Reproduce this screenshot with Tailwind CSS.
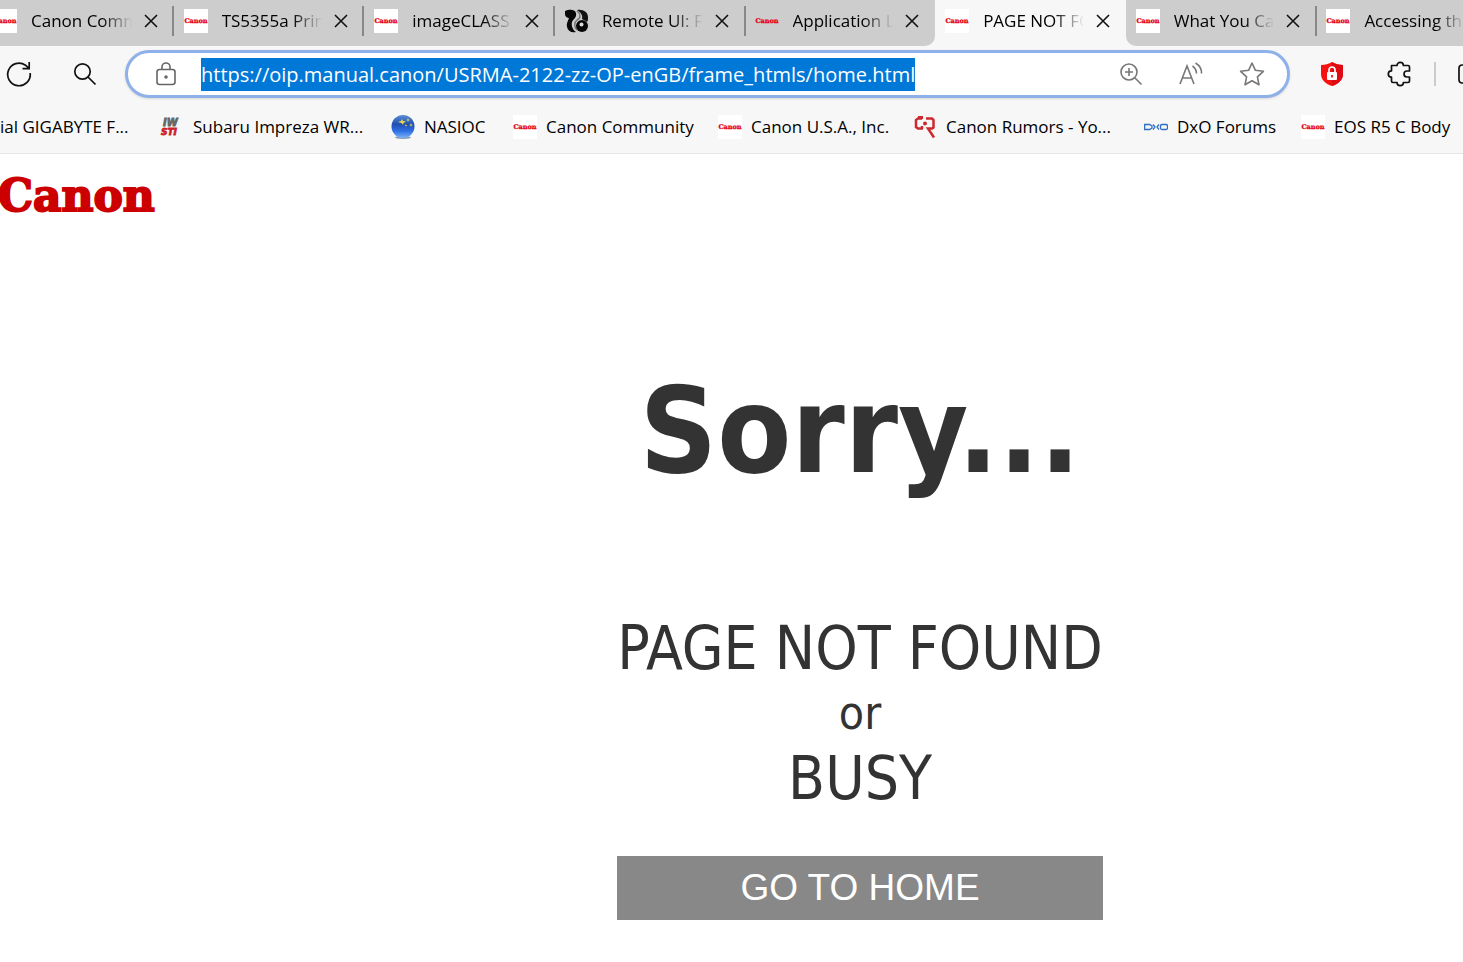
<!DOCTYPE html>
<html lang="en">
<head>
  <meta charset="UTF-8" />
  <meta name="viewport" content="width=device-width, initial-scale=1.0"/>
  <title>PAGE NOT FOUND</title>
  <script src="https://cdn.jsdelivr.net/npm/@tailwindcss/browser@4"></script>
</head>
<body class="bg-white min-h-screen overflow-hidden text-black font-['Open_Sans',sans-serif]">

  <!-- Shared icons -->
  <svg class="hidden">
    <symbol id="canon" viewBox="0 0 24 24">
      <text x="12" y="14" text-anchor="middle" font-family="DejaVu Serif" font-weight="bold" font-size="6.500" fill="#e60012" stroke="#e60012" stroke-width=".3">Canon</text>
    </symbol>
    <symbol id="close" viewBox="0 0 14 14">
      <path d="M1 1l12 12M13 1L1 13" fill="none" stroke="#111" stroke-width="1.6"/>
    </symbol>
  </svg>

  <!-- Tabs -->
  <nav class="flex h-[46px] -ml-[18px] -mr-[44px] bg-[#f7f7f7] text-[17px]" aria-label="Tabs">
    <div class="flex-1 min-w-0 flex items-center pb-1 pl-[11px] pr-[15px] bg-[#cdcdcd] relative">
      <svg class="size-6 shrink-0 bg-white"><use href="#canon"/></svg>
      <a href="#" class="ml-[14px] flex-1 overflow-hidden whitespace-nowrap mask-r-from-70%">Canon Comm</a>
      <button class="ml-3 p-0" aria-label="Close tab"><svg class="size-[14px]"><use href="#close"/></svg></button>
      <span class="absolute z-10 -right-px top-[6px] h-[30px] w-[2px] bg-[#888]"></span>
    </div>
    <div class="flex-1 min-w-0 flex items-center pb-1 pl-[11px] pr-[15px] bg-[#cdcdcd] relative">
      <svg class="size-6 shrink-0 bg-white"><use href="#canon"/></svg>
      <a href="#" class="ml-[14px] flex-1 overflow-hidden whitespace-nowrap mask-r-from-70%">TS5355a Prin</a>
      <button class="ml-3 p-0" aria-label="Close tab"><svg class="size-[14px]"><use href="#close"/></svg></button>
      <span class="absolute z-10 -right-px top-[6px] h-[30px] w-[2px] bg-[#888]"></span>
    </div>
    <div class="flex-1 min-w-0 flex items-center pb-1 pl-[11px] pr-[15px] bg-[#cdcdcd] relative">
      <svg class="size-6 shrink-0 bg-white"><use href="#canon"/></svg>
      <a href="#" class="ml-[14px] flex-1 overflow-hidden whitespace-nowrap mask-r-from-70%">imageCLASS</a>
      <button class="ml-3 p-0" aria-label="Close tab"><svg class="size-[14px]"><use href="#close"/></svg></button>
      <span class="absolute z-10 -right-px top-[6px] h-[30px] w-[2px] bg-[#888]"></span>
    </div>
    <div class="flex-1 min-w-0 flex items-center pb-1 pl-[10px] pr-4 bg-[#cdcdcd] relative">
      <svg class="size-6 shrink-0" viewBox="0 0 24 24">
        <path d="M1 2C5 0 11 0 12 4c1 5-3 6-4 9-1 4 1 8 4 10-5 1-8-1-9-5-1-3 1-6 2-9C4 9 1 8 1 5z" fill="#080808"/>
        <path d="M13 1c6-1 11 2 11 7 0 2 0 4-1 5-2-2-4-2-5-3 1-4-1-6-5-9z" fill="#111"/>
        <path d="M13 2c4 3 4 7 0 9-3 2-3 7 0 10" fill="none" stroke="#777" stroke-width="1.5"/>
        <circle cx="18" cy="17" r="6" fill="#080808"/>
        <circle cx="17.500" cy="15.500" r="2" fill="#ddd"/>
      </svg>
      <a href="#" class="ml-[14px] flex-1 overflow-hidden whitespace-nowrap mask-r-from-70%">Remote UI: F</a>
      <button class="ml-3 p-0" aria-label="Close tab"><svg class="size-[14px]"><use href="#close"/></svg></button>
      <span class="absolute z-10 -right-px top-[6px] h-[30px] w-[2px] bg-[#888]"></span>
    </div>
    <div class="flex-1 min-w-0 flex items-center pb-1 pl-[10px] pr-4 bg-[#cdcdcd] rounded-br-[10px]">
      <svg class="size-6 shrink-0"><use href="#canon"/></svg>
      <a href="#" class="ml-[14px] flex-1 overflow-hidden whitespace-nowrap mask-r-from-70%">Application L</a>
      <button class="ml-3 p-0" aria-label="Close tab"><svg class="size-[14px]"><use href="#close"/></svg></button>
    </div>
    <div class="flex-1 min-w-0 flex items-center pb-1 pl-[10px] pr-4 bg-[#f7f7f7]">
      <svg class="size-6 shrink-0 bg-white"><use href="#canon"/></svg>
      <a href="#" aria-current="page" class="ml-[14px] flex-1 overflow-hidden whitespace-nowrap mask-r-from-70%">PAGE NOT FO</a>
      <button class="ml-3 p-0" aria-label="Close tab"><svg class="size-[14px]"><use href="#close"/></svg></button>
    </div>
    <div class="flex-1 min-w-0 flex items-center pb-1 pl-[10px] pr-4 bg-[#cdcdcd] rounded-bl-[10px] relative">
      <svg class="size-6 shrink-0 bg-white"><use href="#canon"/></svg>
      <a href="#" class="ml-[14px] flex-1 overflow-hidden whitespace-nowrap mask-r-from-70%">What You Ca</a>
      <button class="ml-3 p-0" aria-label="Close tab"><svg class="size-[14px]"><use href="#close"/></svg></button>
      <span class="absolute z-10 -right-px top-[6px] h-[30px] w-[2px] bg-[#888]"></span>
    </div>
    <div class="flex-1 min-w-0 flex items-center pb-1 pl-[10px] pr-4 bg-[#cdcdcd]">
      <svg class="size-6 shrink-0 bg-white"><use href="#canon"/></svg>
      <a href="#" class="ml-[14px] flex-1 overflow-hidden whitespace-nowrap mask-r-from-70%">Accessing th</a>
      <button class="ml-3 p-0" aria-label="Close tab"><svg class="size-[14px]"><use href="#close"/></svg></button>
    </div>
  </nav>

  <!-- Toolbar -->
  <div class="flex items-center bg-[#f7f7f7] pt-1 pb-[6px] pl-[5px] -mr-[19px]">
    <button aria-label="Reload" class="shrink-0">
      <svg class="size-7" viewBox="0 0 28 28" fill="none" stroke="#111" stroke-width="1.7">
        <path d="M25.200 13A11.300 11.300 0 1 1 20.500 5.200L24 8.400M24.200 2v6.700h-6.700"/>
      </svg>
    </button>
    <button aria-label="Search" class="shrink-0 ml-10">
      <svg class="size-6" viewBox="0 0 24 24" fill="none" stroke="#111" stroke-width="1.7">
        <circle cx="9.500" cy="9.500" r="7.700"/><path d="M15 15l7.500 7.500"/>
      </svg>
    </button>
    <div class="ml-7 flex-1 min-w-0 h-12 flex items-center rounded-full border-3 border-[#8fb1ea] bg-white pl-[27px] pr-[22px] shadow-sm">
      <svg class="w-[22px] h-6 shrink-0" viewBox="0 0 22 24" fill="none" stroke="#666" stroke-width="1.6">
        <rect x="2" y="7.500" width="18" height="15" rx="2.500"/><path d="M7 7.500V5a4 4 0 0 1 8 0v2.500"/><circle cx="11" cy="15" r="1" fill="#666"/>
      </svg>
      <input aria-label="Address" value="https://oip.manual.canon/USRMA-2122-zz-OP-enGB/frame_htmls/home.html" class="ml-6 h-[33px] field-sizing-content text-[20px] bg-[#0078d7] text-white outline-none">
      <div class="ml-auto flex items-center gap-9 text-[#777]">
        <button aria-label="Zoom"><svg class="size-6" viewBox="0 0 24 24" fill="none" stroke="currentColor" stroke-width="1.6"><circle cx="10" cy="10" r="8"/><path d="M16 16l6.500 6.500M10 6v8M6 10h8"/></svg></button>
        <button aria-label="Read aloud"><svg class="size-6" viewBox="0 0 24 24" fill="none" stroke="currentColor" stroke-width="1.6"><path d="M1 22L8 4l7 18M3.500 16h9M13.500 4q4 3 4 7.500M16.500 1q6.500 4 6 10.500"/></svg></button>
        <button aria-label="Favorite"><svg class="size-[26px]" viewBox="0 0 26 26" fill="none" stroke="currentColor" stroke-width="1.600" stroke-linejoin="round"><path d="M13 2l3.400 7.300 8 1-6 5.500 1.600 8-7-4-7 4 1.600-8-6-5.500 8-1z"/></svg></button>
      </div>
    </div>
    <button aria-label="Security" class="shrink-0 ml-[30px]">
      <svg class="w-6 h-[26px]" viewBox="0 0 24 26">
        <path d="M12 1c3 2 7 3 11 3v9c0 6-5 10-11 12C6 23 1 19 1 13V4c4 0 8-1 11-3z" fill="#f51212"/>
        <path d="M12 1c3 2 7 3 11 3v9c0 6-5 10-11 12z" fill="#e00b12"/>
        <rect x="7" y="11" width="10" height="8" rx="1" fill="#fff"/>
        <path d="M9 11V9a3 3 0 0 1 6 0v2" fill="none" stroke="#fff" stroke-width="1.700"/>
        <path d="M12 14v2.500" stroke="#e00" stroke-width="1.600"/>
      </svg>
    </button>
    <button aria-label="Extensions" class="shrink-0 ml-[42px]">
      <svg class="size-[26px]" viewBox="0 0 26 26" fill="none" stroke="#111" stroke-width="1.700" stroke-linejoin="round">
        <path d="M5.500 4.500H11a3.200 3.200 0 0 1 6.400 0H22a1.500 1.500 0 0 1 1.500 1.500v4H21a3 3 0 0 0 0 6h2.500v4A1.500 1.500 0 0 1 22 21.500h-4.600a3.200 3.200 0 0 1-6.400 0H7A1.500 1.500 0 0 1 5.500 20v-3.800a3.200 3.200 0 0 1 0-6.400z"/>
      </svg>
    </button>
    <span class="shrink-0 ml-[22px] h-6 w-[2px] bg-[#ccc]"></span>
    <button aria-label="Split screen" class="shrink-0 ml-[22px]">
      <svg class="w-6 h-5" viewBox="0 0 24 20" fill="none" stroke="#111" stroke-width="1.700"><rect x="1" y="1" width="22" height="18" rx="3"/></svg>
    </button>
  </div>

  <!-- Bookmarks -->
  <nav class="grid grid-cols-[160px_231px_122px_205px_195px_231px_157px_1fr] items-center bg-[#f7f7f7] h-[50px] pb-1 border-b border-[#e5e5e5] text-[17px] whitespace-nowrap" aria-label="Favorites">
    <a href="#">ial GIGABYTE F...</a>
    <a href="#" class="flex items-center gap-[9px]">
      <svg class="size-6" viewBox="0 0 24 24" font-family="DejaVu Sans" font-weight="bold" font-style="italic">
        <text x="3" y="11" font-size="10" fill="#666" stroke="#666" stroke-width=".8">IW</text>
        <text x="1" y="20" font-size="9" fill="#cc1f2b" stroke="#cc1f2b" stroke-width=".8">STI</text>
      </svg>
      Subaru Impreza WR...
    </a>
    <a href="#" class="flex items-center gap-[9px]">
      <svg class="size-6" viewBox="0 0 24 24">
        <defs><linearGradient id="globe" x2="0" y2="1"><stop offset="0" stop-color="#5c8fd6"/><stop offset=".4" stop-color="#1f4fb0"/><stop offset=".7" stop-color="#2f6fe4"/><stop offset="1" stop-color="#7db4f5"/></linearGradient></defs>
        <ellipse cx="12" cy="22.500" rx="8" ry="1.500" fill="#8a96b0"/>
        <circle cx="12" cy="11.500" r="11.500" fill="url(#globe)"/>
        <path d="M11 4l1 2 3 .5-2.500 1.500L12 10l-1.500-2L7 7l3-1zM17 3l.5 1.500L19 5l-1.500.5L17 7l-.5-1.500L15 5l1.500-.5zM20 8l.5 1.500L22 10l-1.500.5L20 12l-.5-1.500L18 10l1.500-.5zM15 9l.4 1 1 .4-1 .4-.4 1-.4-1-1-.4 1-.4z" fill="#ecd84c"/>
      </svg>
      NASIOC
    </a>
    <a href="#" class="flex items-center gap-[9px]"><svg class="size-6 bg-white"><use href="#canon"/></svg>Canon Community</a>
    <a href="#" class="flex items-center gap-[9px]"><svg class="size-6 bg-white"><use href="#canon"/></svg>Canon U.S.A., Inc.</a>
    <a href="#" class="flex items-center gap-[9px]">
      <svg class="size-6" viewBox="0 0 24 24" fill="none" stroke="#cc2a30" stroke-width="2.500">
        <path d="M10 13.500H5L3 12V5l2-1.500h4M13 3.500h6l1.500 1.500v7.500L19 13.500h-4l6 9M9 13.500V11"/>
        <path d="M5 2.500h5" stroke-width="3"/><circle cx="12" cy="8.500" r="2" fill="#cc2a30" stroke="none"/>
      </svg>
      Canon Rumors - Yo...
    </a>
    <a href="#" class="flex items-center gap-[9px]">
      <svg class="size-6" viewBox="0 0 24 24" fill="none" stroke="#2c6fc4" stroke-width="1.300">
        <path d="M.7 9.500h5L8 11v2l-2.300 1.500h-5zM9 9.500l2 2.500-2 2.500M15 9.500L13 12l2 2.500"/><rect x="16.500" y="9.500" width="7" height="5" rx="1.500"/>
      </svg>
      DxO Forums
    </a>
    <a href="#" class="flex items-center gap-[9px]"><svg class="size-6 bg-white"><use href="#canon"/></svg>EOS R5 C Body</a>
  </nav>

  <!-- Page -->
  <header class="-ml-[5px] pt-5">
    <a href="#" aria-label="Canon">
      <svg class="w-[170px] h-[44px]" viewBox="0 0 170 44">
        <text x="3" y="37" font-family="DejaVu Serif" font-weight="bold" font-size="44" fill="#c00" stroke="#c00" stroke-width="2">Canon</text>
      </svg>
    </a>
  </header>

  <main class="pl-[257px] flex flex-col items-center text-[#333] font-['DejaVu_Sans_Condensed','DejaVu_Sans',sans-serif]">
    <h1 class="mt-[143px] text-[120px] leading-[140px] font-bold">Sorry...</h1>
    <p class="mt-[112px] text-[60px] leading-[70px]">PAGE NOT FOUND</p>
    <p class="text-[46px] leading-[60px]">or</p>
    <p class="text-[60px] leading-[70px]">BUSY</p>
    <a href="#" class="mt-[43px] w-[486px] h-16 flex items-center justify-center bg-[#888] text-white text-[37px] font-['Liberation_Sans',sans-serif]">GO TO HOME</a>
  </main>
</body>
</html>
